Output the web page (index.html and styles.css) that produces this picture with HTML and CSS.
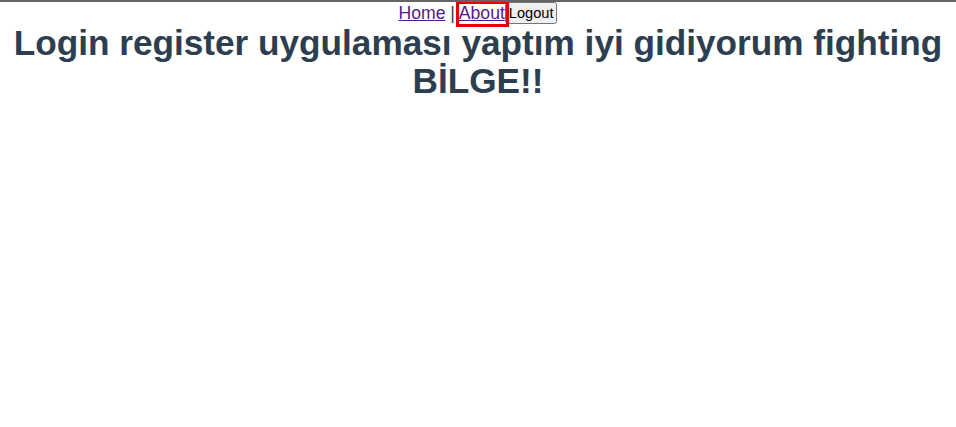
FILE: index.html
```html
<!DOCTYPE html>
<html lang="tr">
  <head>
    <meta charset="UTF-8" />
    <meta name="viewport" content="width=device-width, initial-scale=1.0" />
    <title>login-register</title>
    <link rel="stylesheet" href="styles.css">
  </head>
  <body>
    <div id="app">
      <!-- nav -->
      <div id="nav">
        <a href="#/" class="nav-link">Home</a> |
        <a href="#/about" class="nav-link active">About</a><button class="logout-btn">Logout</button>
      </div>
      <!-- home view -->
      <div class="home">
        <h1>Login register uygulaması yaptım iyi gidiyorum fighting BİLGE!!</h1>
      </div>
    </div>
  </body>
</html>
```

FILE: styles.css
```css
html,
body {
  margin: 0;
  padding: 0;
}

body {
  border-top: 2px solid #646464;
  background-color: #fff;
}

#app {
  font-family: Avenir, Helvetica, Arial, "Liberation Sans", sans-serif;
  -webkit-font-smoothing: antialiased;
  text-align: center;
  color: #2c3e50;
}

#nav {
  font-size: 17.6px;
  line-height: 20px;
  height: 22px;
}

#nav a {
  color: #551a8b;
}

#nav a.active {
  position: relative;
}

/* red marker around the active link */
#nav a.active::after {
  content: "";
  position: absolute;
  top: -2px;
  left: -3px;
  right: -4px;
  bottom: -4px;
  border: 3px solid #e60000;
  pointer-events: none;
}

.logout-btn {
  font-family: Arial, "Liberation Sans", sans-serif;
  font-size: 14.6px;
  line-height: 16px;
  padding: 1px 2px;
  margin: 0;
  vertical-align: 1px;
}

.home h1 {
  font-size: 35.2px;
  line-height: 38px;
  margin: 0;
}
```
